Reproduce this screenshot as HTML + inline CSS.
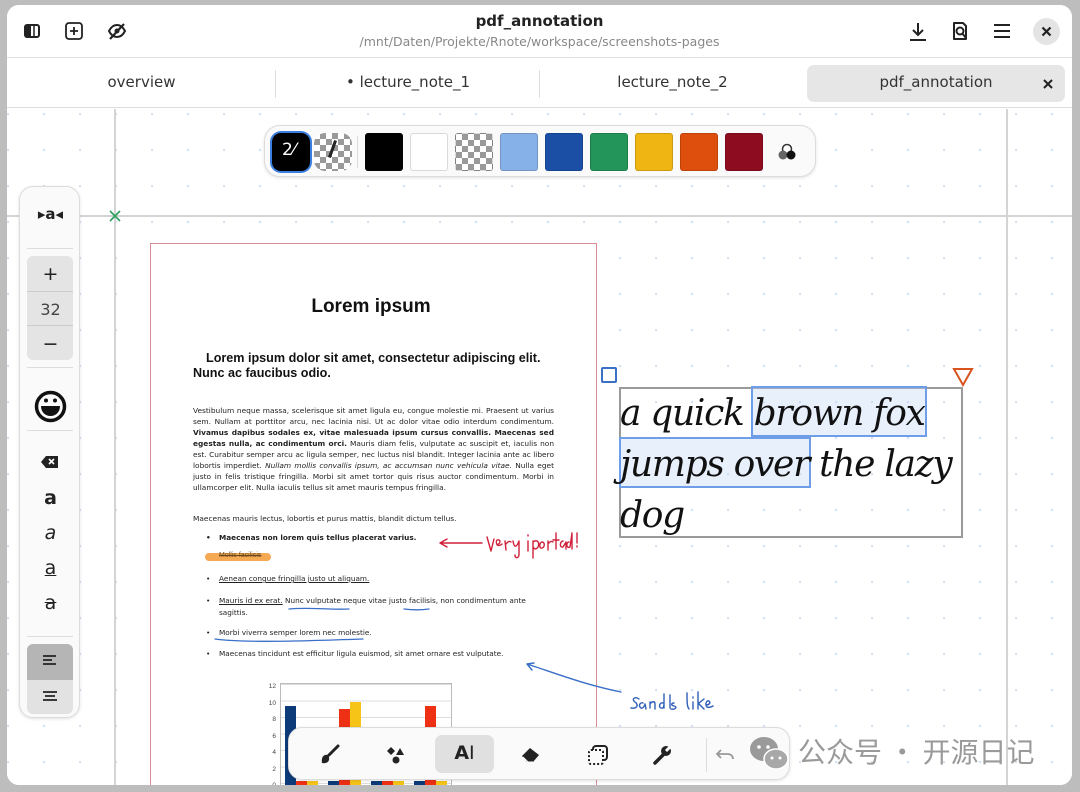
<!DOCTYPE html>
<html><head><meta charset="utf-8"><style>
*{margin:0;padding:0;box-sizing:border-box}
body{width:1080px;height:792px;background:#bdbdbd;font-family:"Liberation Sans","DejaVu Sans",sans-serif;position:relative;overflow:hidden}
#win{position:absolute;left:7px;top:5px;width:1065px;height:780px;background:#fff;border-radius:12px;overflow:hidden}
.abs{position:absolute}
#hdr{left:0;top:0;width:1065px;height:53px;background:#fff;border-bottom:1px solid #e2e2e2}
#tabs{left:0;top:53px;width:1065px;height:50px;background:#fff;border-bottom:1px solid #dedede}
.tab{position:absolute;top:0;height:50px;line-height:48px;text-align:center;font-family:"DejaVu Sans",sans-serif;font-size:15px;color:#333}
#canvas{left:0;top:104px;width:1065px;height:676px;background-color:#fff;background-image:radial-gradient(circle at 1px 1px,#d3e0f2 1px,transparent 1.5px);background-size:36px 36px;background-position:36px 4px}
.pop{background:#fafafa;border:1px solid #dcdcdc;border-radius:14px;box-shadow:0 1px 3px rgba(0,0,0,.12)}
.sw{position:absolute;top:7px;width:38px;height:38px;border-radius:3px;border:1px solid rgba(0,0,0,.15)}
.chk{background-color:#fff;background-image:linear-gradient(45deg,#999 25%,transparent 25%,transparent 75%,#999 75%),linear-gradient(45deg,#999 25%,transparent 25%,transparent 75%,#999 75%);background-size:12px 12px;background-position:0 0,6px 6px}
.pdf{font-family:"DejaVu Sans",sans-serif;font-size:7.4px;color:#222;line-height:11px}
.li{position:absolute;left:68px;font-family:"DejaVu Sans",sans-serif;font-size:7.3px;color:#222;white-space:nowrap}
.li:before{content:"•";position:absolute;left:-13px}
.ic{position:absolute;font-family:"DejaVu Sans",sans-serif;color:#222;text-align:center}
.tl{position:absolute;left:613px;font-family:'DejaVu Serif','Liberation Serif',serif;font-style:italic;font-size:36px;line-height:51px;color:#111;letter-spacing:-1.3px;white-space:nowrap}
</style></head><body>
<div id="win">
 <div id="hdr" class="abs">
  <svg class="abs" style="left:16px;top:17px" width="20" height="18" viewBox="0 0 20 18"><rect x="2" y="3" width="14" height="12" rx="2" fill="none" stroke="#222" stroke-width="2"/><rect x="3" y="4" width="5" height="10" fill="#222"/><line x1="11" y1="4" x2="11" y2="14" stroke="#222" stroke-width="1.5"/></svg>
  <svg class="abs" style="left:57px;top:16px" width="20" height="20" viewBox="0 0 20 20"><rect x="2" y="2" width="16" height="16" rx="3" fill="none" stroke="#222" stroke-width="1.8"/><path d="M10 6v8M6 10h8" stroke="#222" stroke-width="1.8"/></svg>
  <svg class="abs" style="left:99px;top:16px" width="22" height="20" viewBox="0 0 22 20"><path d="M3 10c2-4 5-6 8-6s6 2 8 6c-2 4-5 6-8 6s-6-2-8-6z" fill="none" stroke="#222" stroke-width="2"/><circle cx="11" cy="10" r="2.5" fill="#222"/><path d="M4 18L18 3" stroke="#222" stroke-width="2.2"/></svg>
  <div class="abs" style="left:0;width:1065px;top:7px;text-align:center;font-family:'DejaVu Sans',sans-serif;font-weight:bold;font-size:15px;color:#222">pdf_annotation</div>
  <div class="abs" style="left:0;width:1065px;top:29px;text-align:center;font-family:'DejaVu Sans',sans-serif;font-size:12.5px;color:#888">/mnt/Daten/Projekte/Rnote/workspace/screenshots-pages</div>
  <svg class="abs" style="left:900px;top:16px" width="22" height="22" viewBox="0 0 22 22"><path d="M11 2v12M6 9l5 5 5-5" fill="none" stroke="#222" stroke-width="2"/><path d="M3 19h16" stroke="#222" stroke-width="2"/></svg>
  <svg class="abs" style="left:942px;top:15px" width="22" height="22" viewBox="0 0 22 22"><path d="M5 3h9l3 3v13H5z" fill="none" stroke="#222" stroke-width="2" stroke-linejoin="round"/><circle cx="11" cy="11" r="3.5" fill="none" stroke="#222" stroke-width="2"/><path d="M13 13l4 5" stroke="#222" stroke-width="2"/></svg>
  <svg class="abs" style="left:985px;top:17px" width="20" height="18" viewBox="0 0 20 18"><path d="M2 3h16M2 9h16M2 15h16" stroke="#222" stroke-width="2"/></svg>
  <div class="abs" style="left:1026px;top:13px;width:27px;height:27px;border-radius:50%;background:#e4e4e4"></div>
  <svg class="abs" style="left:1033px;top:20px" width="13" height="13" viewBox="0 0 13 13"><path d="M2.5 2.5l8 8M10.5 2.5l-8 8" stroke="#222" stroke-width="2.2"/></svg>
 </div>
 <div id="tabs" class="abs">
  <div class="tab" style="left:0;width:269px">overview</div>
  <div class="abs" style="left:268px;top:12px;width:1px;height:28px;background:#ddd"></div>
  <div class="tab" style="left:269px;width:264px">• lecture_note_1</div>
  <div class="abs" style="left:532px;top:12px;width:1px;height:28px;background:#ddd"></div>
  <div class="tab" style="left:533px;width:265px">lecture_note_2</div>
  <div class="abs" style="left:800px;top:7px;width:258px;height:37px;border-radius:7px;background:#e6e6e6"></div>
  <div class="tab" style="left:800px;width:258px;line-height:48px">pdf_annotation</div>
  <svg class="abs" style="left:1035px;top:20px" width="12" height="12" viewBox="0 0 12 12"><path d="M2 2l8 8M10 2l-8 8" stroke="#222" stroke-width="2"/></svg>
 </div>
 <div id="canvas" class="abs">
  <div class="abs" style="left:107px;top:0;width:2px;height:676px;background:#d4d4d4"></div>
  <div class="abs" style="left:999px;top:0;width:2px;height:676px;background:#d4d4d4"></div>
  <div class="abs" style="left:0;top:106px;width:1065px;height:2px;background:#d4d4d4"></div>
  <svg class="abs" style="left:101px;top:100px" width="14" height="14"><path d="M2 2l10 10M12 2L2 12" stroke="#2aa060" stroke-width="1.6"/></svg>
  <div class="abs" style="left:143px;top:134px;width:447px;height:560px;border:1px solid #d88a95;background:#fff">
   <div class="abs" style="left:0;width:440px;top:52px;text-align:center;font-weight:bold;font-size:19px;color:#111">Lorem ipsum</div>
   <div class="abs" style="left:42px;top:107px;width:360px;font-weight:bold;font-size:12.6px;line-height:15px;color:#111;text-indent:13px">Lorem ipsum dolor sit amet, consectetur adipiscing elit. Nunc ac faucibus odio.</div>
   <div class="abs pdf" style="left:42px;top:161px;width:361px;text-align:justify">Vestibulum neque massa, scelerisque sit amet ligula eu, congue molestie mi. Praesent ut varius sem. Nullam at porttitor arcu, nec lacinia nisi. Ut ac dolor vitae odio interdum condimentum. <b>Vivamus dapibus sodales ex, vitae malesuada ipsum cursus convallis. Maecenas sed egestas nulla, ac condimentum orci.</b> Mauris diam felis, vulputate ac suscipit et, iaculis non est. Curabitur semper arcu ac ligula semper, nec luctus nisl blandit. Integer lacinia ante ac libero lobortis imperdiet. <i>Nullam mollis convallis ipsum, ac accumsan nunc vehicula vitae.</i> Nulla eget justo in felis tristique fringilla. Morbi sit amet tortor quis risus auctor condimentum. Morbi in ullamcorper elit. Nulla iaculis tellus sit amet mauris tempus fringilla.</div>
   <div class="abs pdf" style="left:42px;top:269px;white-space:nowrap">Maecenas mauris lectus, lobortis et purus mattis, blandit dictum tellus.</div>
   <div class="li" style="top:289px;font-weight:bold">Maecenas non lorem quis tellus placerat varius.</div>
   <div class="abs" style="left:54px;top:309px;width:66px;height:8px;background:#f5a040;border-radius:4px;opacity:.9"></div>
   <div class="abs" style="left:68px;top:308px;font-size:7px;color:#6a4a20;text-decoration:line-through">Mollis facilisis</div>
   <div class="li" style="top:330px;text-decoration:underline">Aenean congue fringilla justo ut aliquam.</div>
   <div class="li" style="top:352px"><u>Mauris id ex erat.</u> Nunc vulputate neque vitae justo facilisis, non condimentum ante</div>
   <div class="abs pdf" style="left:68px;top:363px;font-size:7.3px">sagittis.</div>
   <div class="li" style="top:384px">Morbi viverra semper lorem nec molestie.</div>
   <div class="li" style="top:405px">Maecenas tincidunt est efficitur ligula euismod, sit amet ornare est vulputate.</div>
   <div class="abs" style="left:115px;top:435px;font-size:6.5px;color:#444;line-height:16.5px;text-align:right;width:10px">12<br>10<br>8<br>6<br>4<br>2<br>0</div>
   <div class="abs" style="left:129px;top:439px;width:172px;height:110px;border:1px solid #bbb;background:repeating-linear-gradient(to bottom,#ddd 0,#ddd 1px,transparent 1px,transparent 16.5px)"></div>
   <div class="abs" style="left:134px;top:462px;width:11px;height:90px;background:#0d3a78"></div>
   <div class="abs" style="left:145px;top:537px;width:11px;height:15px;background:#ee3014"></div>
   <div class="abs" style="left:156px;top:537px;width:11px;height:15px;background:#f6c417"></div>
   <div class="abs" style="left:177px;top:537px;width:11px;height:15px;background:#0d3a78"></div>
   <div class="abs" style="left:188px;top:465px;width:11px;height:87px;background:#ee3014"></div>
   <div class="abs" style="left:199px;top:458px;width:11px;height:94px;background:#f6c417"></div>
   <div class="abs" style="left:220px;top:537px;width:11px;height:15px;background:#0d3a78"></div>
   <div class="abs" style="left:231px;top:537px;width:11px;height:15px;background:#ee3014"></div>
   <div class="abs" style="left:242px;top:537px;width:11px;height:15px;background:#f6c417"></div>
   <div class="abs" style="left:263px;top:537px;width:11px;height:15px;background:#0d3a78"></div>
   <div class="abs" style="left:274px;top:462px;width:11px;height:90px;background:#ee3014"></div>
   <div class="abs" style="left:285px;top:537px;width:11px;height:15px;background:#f6c417"></div>
  </div>
  <svg class="abs" style="left:0;top:0" width="1065" height="676" viewBox="0 0 1065 676">
   <g fill="none" stroke-linecap="round" stroke-linejoin="round">
    <path d="M433 434h42M440 430l-7 4 7 4" stroke="#d0203a" stroke-width="1.4"/>
    <path d="M480 428l4 14 3-12M490 436c4-2 4-6 0-5-2 3 1 8 5 4M498 432l1 9M499 435c2-3 4-3 5-2M506 432c1 6 3 8 6 0l0 14c-1 4-4 3-4 0M521 426v1M521 432v10M526 432v17M526 433c4-3 7 0 5 5-2 3-4 2-5 0M535 433c-3 1-3 7 0 6 3-1 3-6 0-6M541 432v9M541 435c2-3 4-3 5-2M549 424v16 M546 431h6M556 432c-3 0-4 7 0 6l3-5v7M562 433c-3 0-3 7 1 5l2-14v16M570 424v10M570 437v1" stroke="#d0203a" stroke-width="1.4"/>
    <path d="M208 530c30 4 90 2 148 0M282 500c20-2 40 1 60 0M397 500c8 1 18 1 25 0" stroke="#3a6fc8" stroke-width="1.3"/>
    <path d="M520 555c25 8 55 20 94 28M520 555l5 6M520 555l7-1" stroke="#3a6fc8" stroke-width="1.4"/>
    <path d="M632 590c-4-3-8 0-4 3s2 7-4 6M636 594c-3-1-5 3-2 5 2 1 4-3 4-4l1 5M643 593v6M643 595c2-3 5-3 5 0v5M656 594c-3-1-5 4-2 5 3 1 3-3 3-5l0-9v14M663 586l0 13M667 594c-2 0-4 2 0 3s1 4-3 3M680 584c0 8 0 14 2 16M686 588v1M686 593v7M691 583v17M692 594l5-4M692 595l5 5M699 596c3 0 5-2 3-4-3-1-4 4-2 6 2 1 4 0 6-1" stroke="#2e5fb8" stroke-width="1.4"/>
   </g>
  </svg>
  <div class="abs" style="left:594px;top:258px;width:16px;height:16px;border:2px solid #3c6fc6;border-radius:2px"></div>
  <svg class="abs" style="left:945px;top:258px" width="22" height="20"><path d="M2 2h18L11 18z" fill="none" stroke="#d9531e" stroke-width="2"/></svg>
  <div class="abs" style="left:612px;top:278px;width:344px;height:151px;border:2px solid #9a9a9a"></div>
  <div class="abs" style="left:744px;top:277px;width:176px;height:51px;border:2px solid #6f9ee8;background:rgba(190,212,245,.35)"></div>
  <div class="abs" style="left:612px;top:328px;width:192px;height:51px;border:2px solid #6f9ee8;background:rgba(190,212,245,.35)"></div>
  <div class="tl" style="top:279px">a quick brown fox</div>
  <div class="tl" style="top:330px">jumps over the lazy</div>
  <div class="tl" style="top:381px">dog</div>
  <div class="abs pop" style="left:257px;top:16px;width:552px;height:52px;border-radius:16px">
   <div class="abs" style="left:7px;top:7px;width:38px;height:38px;border-radius:9px;background:#000;box-shadow:0 0 0 2px #3a7fe0"></div>
   <div class="abs" style="left:17px;top:14px;color:#fff;font-size:17px;font-family:'DejaVu Sans'">2⁄</div>
   <div class="abs chk" style="left:49px;top:7px;width:38px;height:38px;border-radius:11px"></div>
   <div class="abs" style="left:66px;top:14px;width:3px;height:18px;background:#222;transform:rotate(20deg)"></div>
   <div class="abs" style="left:92px;top:10px;width:1px;height:32px;background:#ddd"></div>
   <div class="sw" style="left:100px;background:#000"></div>
   <div class="sw" style="left:145px;background:#fff"></div>
   <div class="sw chk" style="left:190px"></div>
   <div class="sw" style="left:235px;background:#86b0e8"></div>
   <div class="sw" style="left:280px;background:#1b4fa6"></div>
   <div class="sw" style="left:325px;background:#23955a"></div>
   <div class="sw" style="left:370px;background:#efb513"></div>
   <div class="sw" style="left:415px;background:#de4e0c"></div>
   <div class="sw" style="left:460px;background:#8e0c20"></div>
   <svg class="abs" style="left:512px;top:17px" width="22" height="18"><circle cx="10" cy="6" r="4.5" fill="#fff" stroke="#333" stroke-width="1.5"/><circle cx="6" cy="12" r="4.5" fill="#666"/><circle cx="14" cy="12" r="4.5" fill="#111"/></svg>
  </div>
  <div class="abs pop" style="left:12px;top:77px;width:61px;height:532px">
   <div class="ic" style="left:0;width:61px;top:18px;font-size:15px;font-weight:bold">▸a◂</div>
   <div class="abs" style="left:7px;top:61px;width:46px;height:1px;background:#ddd"></div>
   <div class="abs" style="left:7px;top:69px;width:46px;height:104px;border-radius:6px;background:#e4e4e4"></div>
   <div class="abs" style="left:7px;top:104px;width:46px;height:1px;background:#ccc"></div>
   <div class="abs" style="left:7px;top:138px;width:46px;height:1px;background:#ccc"></div>
   <div class="ic" style="left:0;width:61px;top:76px;font-size:19px">+</div>
   <div class="ic" style="left:0;width:61px;top:113px;font-size:16px;color:#444">32</div>
   <div class="ic" style="left:0;width:61px;top:146px;font-size:19px">−</div>
   <div class="abs" style="left:7px;top:180px;width:46px;height:1px;background:#ddd"></div>
   <svg class="abs" style="left:14px;top:203px" width="33" height="33"><circle cx="16.5" cy="16.5" r="14" fill="none" stroke="#111" stroke-width="3.5"/><path d="M7 16h19c0 6-4 10-9.5 10S7 22 7 16z" fill="#111"/><circle cx="12" cy="10.5" r="2" fill="#111"/><circle cx="21" cy="10.5" r="2" fill="#111"/></svg>
   <div class="abs" style="left:7px;top:243px;width:46px;height:1px;background:#ddd"></div>
   <svg class="abs" style="left:20px;top:268px" width="20" height="14"><path d="M6 1h12v12H6L1 7z" fill="#222"/><path d="M9 4l5 5M14 4l-5 5" stroke="#fff" stroke-width="1.6"/></svg>
   <div class="ic" style="left:0;width:61px;top:300px;font-size:19px;font-weight:bold">a</div>
   <div class="ic" style="left:0;width:61px;top:335px;font-size:19px;font-style:italic">a</div>
   <div class="ic" style="left:0;width:61px;top:370px;font-size:19px;text-decoration:underline">a</div>
   <div class="ic" style="left:0;width:61px;top:405px;font-size:19px;text-decoration:line-through">a</div>
   <div class="abs" style="left:7px;top:449px;width:46px;height:1px;background:#ddd"></div>
   <div class="abs" style="left:7px;top:457px;width:46px;height:70px;border-radius:6px;background:#e2e2e2;overflow:hidden"><div style="height:36px;background:#b5b5b5"></div></div>
   <svg class="abs" style="left:22px;top:467px" width="16" height="14"><path d="M1 2h13M1 6h9M1 10h13" stroke="#222" stroke-width="1.8"/></svg>
   <svg class="abs" style="left:22px;top:503px" width="16" height="14"><path d="M1 2h14M3 6h10M1 10h14" stroke="#222" stroke-width="1.8"/></svg>
  </div>
  <div class="abs pop" style="left:281px;top:618px;width:502px;height:53px;border-radius:14px">
   <svg class="abs" style="left:30px;top:16px" width="22" height="22"><path d="M19 2l-9 9" stroke="#222" stroke-width="3" stroke-linecap="round"/><path d="M9 11c-4-1-7 2-6 8 4 1 8-1 7-6z" fill="#222"/></svg>
   <svg class="abs" style="left:96px;top:16px" width="22" height="22"><path d="M6 3l4 4-4 4-4-4z" fill="#222"/><path d="M15 4l4 7h-8z" fill="#222"/><circle cx="11" cy="16" r="3.5" fill="#222"/></svg>
   <div class="abs" style="left:146px;top:7px;width:59px;height:38px;border-radius:7px;background:#e0e0e0"></div>
   <div class="ic" style="left:146px;width:59px;top:14px;font-size:19px;font-weight:bold">A<span style="font-weight:normal">I</span></div>
   <svg class="abs" style="left:230px;top:17px" width="22" height="20"><path d="M3 11l8-8 9 7-6 7H8z" fill="#222"/><path d="M4 12l5 5h5" fill="none" stroke="#fff" stroke-width="1"/></svg>
   <svg class="abs" style="left:298px;top:16px" width="22" height="22"><rect x="6" y="2" width="14" height="14" rx="3" fill="none" stroke="#222" stroke-width="2"/><rect x="2" y="6" width="14" height="14" rx="2" fill="#fafafa" stroke="#222" stroke-width="2" stroke-dasharray="2 2"/></svg>
   <svg class="abs" style="left:362px;top:16px" width="22" height="22"><path d="M4 19l9-9" stroke="#222" stroke-width="3.5" stroke-linecap="round"/><circle cx="15" cy="7" r="5" fill="#222"/><path d="M15 7l4-4" stroke="#fafafa" stroke-width="3"/></svg>
   <div class="abs" style="left:417px;top:10px;width:1px;height:34px;background:#ddd"></div>
   <svg class="abs" style="left:426px;top:18px" width="22" height="18"><path d="M6 4L2 8l4 4M2 8h10c4 0 6 2 6 5" fill="none" stroke="#999" stroke-width="1.8"/></svg>
  </div>
  <svg class="abs" style="left:740px;top:625px" width="45" height="40"><ellipse cx="17" cy="15" rx="14" ry="12" fill="#9a9a9a"/><ellipse cx="29" cy="25" rx="12" ry="10" fill="#a8a8a8" stroke="#fff" stroke-width="1.5"/><circle cx="12" cy="13" r="1.8" fill="#fff"/><circle cx="21" cy="13" r="1.8" fill="#fff"/><circle cx="25" cy="24" r="1.5" fill="#fff"/><circle cx="33" cy="24" r="1.5" fill="#fff"/></svg>
  <div class="abs" style="left:791px;top:622px;font-family:'Noto Sans CJK SC',sans-serif;font-size:28px;color:#9a9a9a;white-space:nowrap">公众号 · 开源日记</div>
 </div>
</div>
</body></html>
